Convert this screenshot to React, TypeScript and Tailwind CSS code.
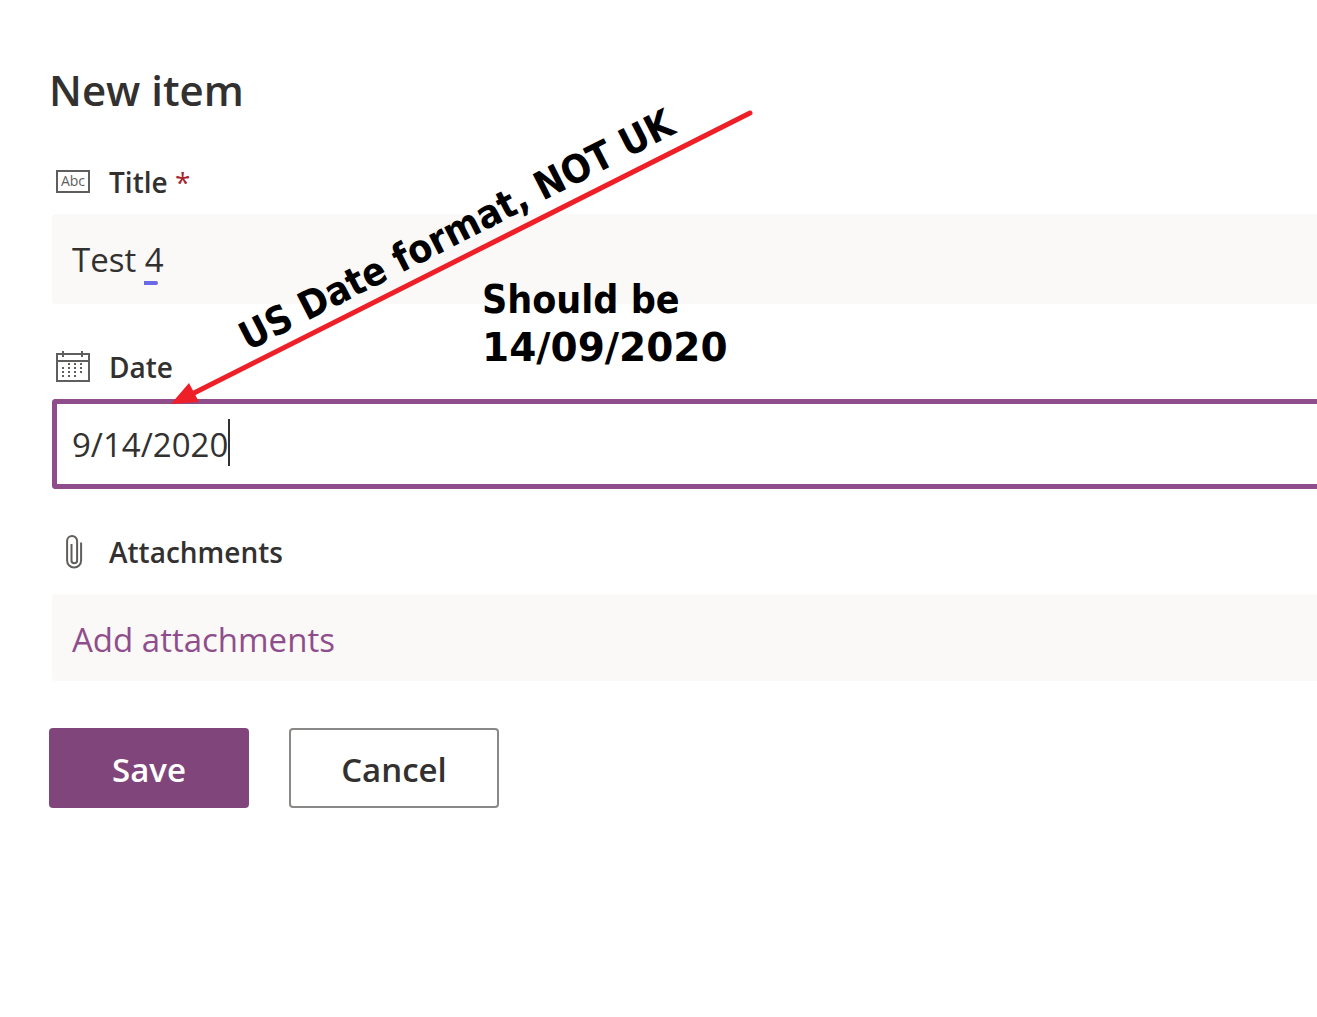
import { useState, type ReactNode } from "react";

function TextIcon() {
    return (
        <svg viewBox="0 0 34 34" className="w-[34px] h-[34px]" aria-hidden="true">
            <rect x="1" y="6" width="32" height="21" fill="none" stroke="#605e5c" strokeWidth="2" />
            <text x="17" y="21" textAnchor="middle" fill="#605e5c" fontSize="14" fontWeight="500" fontFamily="Open Sans, sans-serif">
                Abc
            </text>
        </svg>
    );
}

const calendarDots = [
    [13, 14], [19, 14], [25, 14],
    [7, 18], [13, 18], [19, 18], [25, 18],
    [7, 22], [13, 22], [19, 22], [25, 22],
    [7, 26], [13, 26], [19, 26],
];

function CalendarIcon() {
    return (
        <svg viewBox="0 0 34 34" className="w-[34px] h-[34px]" aria-hidden="true">
            <path d="M1 4h32v27H1zM1 11h32M7 1v6M26 1v6" fill="none" stroke="#605e5c" strokeWidth="2" />
            {calendarDots.map(([x, y]) => (
                <rect key={`${x}-${y}`} x={x - 1} y={y - 1} width="2" height="2" fill="#605e5c" />
            ))}
        </svg>
    );
}

function ClipIcon() {
    return (
        <svg viewBox="0 0 34 34" className="w-[34px] h-[34px]" aria-hidden="true">
            <path
                d="M15.500 9v16.500a2.800 2.800 0 0 0 5.600 0V6a5 5 0 0 0-10 0V25.500a7 7 0 0 0 14 0V7.500"
                fill="none"
                stroke="#605e5c"
                strokeWidth="2"
            />
        </svg>
    );
}

function FieldLabel({ icon, htmlFor, children }: { icon: ReactNode; htmlFor: string; children: ReactNode }) {
    return (
        <label htmlFor={htmlFor} className="flex items-center h-[60px] pl-1 pb-[5px] gap-[19px] text-[28px] font-semibold">
            {icon}
            <span>{children}</span>
        </label>
    );
}

function Annotations() {
    return (
        <div className="absolute inset-0 pointer-events-none text-[39px] leading-[48px] font-bold text-black">
            <svg className="absolute left-[170px] top-[105px] w-[590px] h-[305px]" viewBox="170 105 590 305" aria-hidden="true">
                <path d="M750 113 190 395" stroke="#ee1f27" strokeWidth="5" strokeLinecap="round" />
                <path d="M171 404 189 383 199 402z" fill="#ee1f27" />
            </svg>
            <span className="absolute left-[253px] top-[313px] origin-bottom-left -rotate-[27deg] whitespace-nowrap font-['DejaVu_Sans_Condensed','DejaVu_Sans',sans-serif]">
                US Date format, NOT UK
            </span>
            <p className="absolute left-[482px] top-[276px] font-['DejaVu_Sans',sans-serif]">
                <span className="block font-['DejaVu_Sans_Condensed','DejaVu_Sans',sans-serif]">Should be</span>
                <span className="block">14/09/2020</span>
            </p>
        </div>
    );
}

export default function App() {
    const [title, setTitle] = useState("Test 4");
    const [date, setDate] = useState("9/14/2020");

    return (
        <main className="relative min-h-screen overflow-hidden bg-white pl-[49px] pt-[58px] font-['Open_Sans',sans-serif] text-[#323130]">
            <h1 className="text-[42px] leading-[64px] font-semibold">New item</h1>

            <form onSubmit={(e) => e.preventDefault()} className="pt-8">
                <div className="pl-[3px]">
                    <FieldLabel icon={<TextIcon />} htmlFor="title">
                        Title <span className="font-normal text-[#a4262c]">*</span>
                    </FieldLabel>
                    <div className="relative h-[90px] rounded-l bg-[#faf9f8]">
                        <input
                            id="title"
                            required
                            spellCheck={false}
                            value={title}
                            onChange={(e) => setTitle(e.target.value)}
                            className="w-full h-full pl-5 text-[33px] outline-none"
                        />
                        {/* Grammar hint */}
                        <span className="absolute left-[92px] bottom-[19px] w-[14px] h-1 rounded-r-sm bg-[#6b69e6]" />
                    </div>

                    <div className="pt-[35px]">
                        <FieldLabel icon={<CalendarIcon />} htmlFor="date">
                            Date
                        </FieldLabel>
                        <div className="flex items-center h-[90px] pl-[15px] rounded-l border-5 border-r-0 border-[#8f4e8b]">
                            <input
                                id="date"
                                value={date}
                                onChange={(e) => setDate(e.target.value)}
                                className="field-sizing-content h-full text-[33px] outline-none"
                            />
                            <span className="w-[2px] h-[47px] mb-1 bg-[#323130]" />
                        </div>
                    </div>

                    <div className="pt-[35px]">
                        <FieldLabel icon={<ClipIcon />} htmlFor="attachments">
                            Attachments
                        </FieldLabel>
                        <button
                            id="attachments"
                            type="button"
                            className="block w-full h-[87px] mt-[10px] pl-5 pt-1 rounded-l bg-[#faf9f8] text-left text-[33px] text-[#8f4e8b]"
                        >
                            Add attachments
                        </button>
                    </div>
                </div>

                <div className="flex gap-10 pt-[47px] text-[33px] font-semibold">
                    <button type="submit" className="w-[200px] h-20 pt-1 rounded bg-[#80457b] text-white">
                        Save
                    </button>
                    <button type="button" className="w-[210px] h-20 pt-1 rounded border-2 border-[#8a8886]">
                        Cancel
                    </button>
                </div>
            </form>

            <Annotations />
        </main>
    );
}
